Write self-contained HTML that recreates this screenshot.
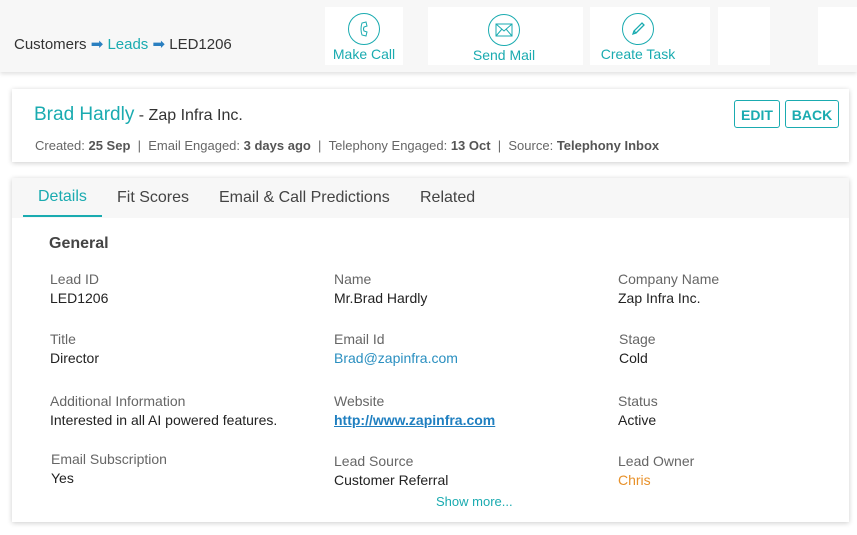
<!DOCTYPE html>
<html><head><style>
*{margin:0;padding:0;box-sizing:border-box}
body{width:857px;height:535px;background:#fff;font-family:"Liberation Sans",sans-serif;position:relative;overflow:hidden;color:#333}
.abs{position:absolute}
.top{left:0;top:0;width:857px;height:72px;background:#f7f7f7;box-shadow:0 2px 4px rgba(0,0,0,.12)}
.tb{background:#fff;height:58px;top:7px}
.act{color:#1aabb0;font-size:14px;text-align:center}
.ico{width:32px;height:32px;border:1.5px solid #1aabb0;border-radius:50%;margin:0 auto 1px;display:flex;align-items:center;justify-content:center}
.card{background:#fff;box-shadow:0 1px 5px rgba(0,0,0,.2);left:12px;width:837px}
.teal{color:#1aabb0}
.btn{border:1px solid #1aabb0;border-radius:3px;color:#1aabb0;font-size:14px;font-weight:bold;height:28px;line-height:28px;text-align:center}
.meta{font-size:13px;color:#666}
.meta b{color:#555}
.lbl{font-size:14px;color:#666}
.val{font-size:14px;color:#222}
</style></head><body>
<div class="abs top"></div>
<div class="abs tb" style="left:325px;width:78px"></div>
<div class="abs tb" style="left:428px;width:155px"></div>
<div class="abs tb" style="left:590px;width:120px"></div>
<div class="abs tb" style="left:718px;width:52px"></div>
<div class="abs tb" style="left:818px;width:39px"></div>
<div class="abs" style="left:14px;top:35px;font-size:15px;color:#333">Customers <span style="color:#2a7fc0">➡</span> <span class="teal">Leads</span> <span style="color:#2a7fc0">➡</span> LED1206</div>
<div class="abs act" style="left:328px;top:13px;width:72px"><div class="ico"><svg width="14" height="18" viewBox="0 0 14 18"><path d="M9 2 L5 3 Q3 9 5 15 L9 16 L10 12 L7 11 Q6 9 7 7 L10 6 Z" fill="none" stroke="#1aabb0" stroke-width="1"/></svg></div>Make Call</div>
<div class="abs act" style="left:468px;top:14px;width:72px"><div class="ico"><svg width="18" height="14" viewBox="0 0 18 14"><rect x="1" y="1" width="16" height="12" fill="none" stroke="#1aabb0"/><path d="M1 1 L9 8 L17 1 M1 13 L7 6 M17 13 L11 6" fill="none" stroke="#1aabb0"/></svg></div>Send Mail</div>
<div class="abs act" style="left:597px;top:13px;width:82px"><div class="ico"><svg width="16" height="16" viewBox="0 0 16 16"><path d="M3 13 L4 10 L12 2 L14 4 L6 12 Z M4 10 L6 12" fill="none" stroke="#1aabb0" stroke-width="1.3"/></svg></div>Create Task</div>

<div class="abs card" style="top:89px;height:73px"></div>
<div class="abs" style="left:34px;top:104px;font-size:19px" ><span class="teal">Brad Hardly</span><span style="font-size:16px;color:#333"> - Zap Infra Inc.</span></div>
<div class="abs btn" style="left:734px;top:100px;width:46px">EDIT</div>
<div class="abs btn" style="left:785px;top:100px;width:54px">BACK</div>
<div class="abs meta" style="left:35px;top:138px">Created: <b>25 Sep</b> &nbsp;| &nbsp;Email Engaged: <b>3 days ago</b> &nbsp;| &nbsp;Telephony Engaged: <b>13 Oct</b> &nbsp;| &nbsp;Source: <b>Telephony Inbox</b></div>

<div class="abs card" style="top:178px;height:344px"></div>
<div class="abs" style="left:12px;top:178px;width:837px;height:40px;background:#f7f7f7"></div>
<div class="abs" style="left:23px;top:215px;width:79px;height:2px;background:#1aabb0"></div>
<div class="abs" style="left:38px;top:188px;font-size:16px;color:#1aabb0">Details</div>
<div class="abs" style="left:117px;top:189px;font-size:16px;color:#444">Fit Scores</div>
<div class="abs" style="left:219px;top:189px;font-size:16px;color:#444">Email &amp; Call Predictions</div>
<div class="abs" style="left:420px;top:189px;font-size:16px;color:#444">Related</div>
<div class="abs" style="left:49px;top:235px;font-size:16px;font-weight:bold;color:#444">General</div>

<div class="abs lbl" style="left:50px;top:271px">Lead ID</div><div class="abs val" style="left:50px;top:290px">LED1206</div>
<div class="abs lbl" style="left:334px;top:271px">Name</div><div class="abs val" style="left:334px;top:290px">Mr.Brad Hardly</div>
<div class="abs lbl" style="left:618px;top:271px">Company Name</div><div class="abs val" style="left:618px;top:290px">Zap Infra Inc.</div>

<div class="abs lbl" style="left:50px;top:331px">Title</div><div class="abs val" style="left:50px;top:350px">Director</div>
<div class="abs lbl" style="left:334px;top:331px">Email Id</div><div class="abs val" style="left:334px;top:350px;color:#2a8fc0">Brad@zapinfra.com</div>
<div class="abs lbl" style="left:619px;top:331px">Stage</div><div class="abs val" style="left:619px;top:350px">Cold</div>

<div class="abs lbl" style="left:50px;top:393px">Additional Information</div><div class="abs val" style="left:50px;top:412px">Interested in all AI powered features.</div>
<div class="abs lbl" style="left:334px;top:393px">Website</div><div class="abs val" style="left:334px;top:412px;color:#1f7fc0;font-weight:bold;text-decoration:underline">http://www.zapinfra.com</div>
<div class="abs lbl" style="left:618px;top:393px">Status</div><div class="abs val" style="left:618px;top:412px">Active</div>

<div class="abs lbl" style="left:51px;top:451px">Email Subscription</div><div class="abs val" style="left:51px;top:470px">Yes</div>
<div class="abs lbl" style="left:334px;top:453px">Lead Source</div><div class="abs val" style="left:334px;top:472px">Customer Referral</div>
<div class="abs lbl" style="left:618px;top:453px">Lead Owner</div><div class="abs val" style="left:618px;top:472px;color:#e8912a">Chris</div>
<div class="abs" style="left:436px;top:494px;font-size:13px;color:#1aabb0">Show more...</div>
</body></html>
